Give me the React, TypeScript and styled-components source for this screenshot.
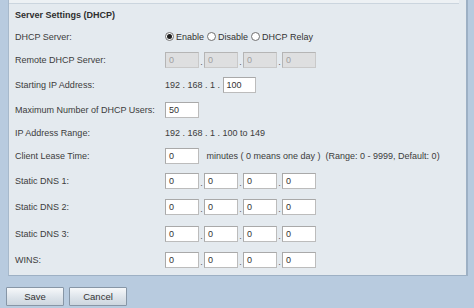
import React from "react";
import styled, { createGlobalStyle } from "styled-components";

const Global = createGlobalStyle`
  html, body { margin: 0; padding: 0; }
  body {
    background: #b8cbdf;
    font-family: "Liberation Sans", Arial, sans-serif;
    overflow: hidden;
  }
`;

const Page = styled.div`
  width: 474px;
  height: 308px;
  display: flex;
  flex-direction: column;
  background: #b8cbdf;
`;

const Panel = styled.div`
  margin: 0 6px 0 8px;
  height: 276px;
  box-sizing: border-box;
  background: #e4eaef;
  border-left: 1px solid #a7b9cb;
  border-right: 2px solid #9db0c4;
  border-bottom: 1px solid #9db0c4;
  display: flex;
  flex-direction: column;
`;

const TopStrip = styled.div`
  height: 3px;
  margin-right: 7px;
  background: #edf1f4;
  border-bottom: 1px solid #cbd5de;
`;

const Form = styled.div`
  display: flex;
  flex-direction: column;
  padding-left: 6px;
`;

const Row = styled.div<{ $h: number }>`
  height: ${(p) => p.$h}px;
  display: flex;
  align-items: center;
  font-size: 9px;
  color: #3c3c3c;
`;

const Heading = styled.div`
  font-weight: bold;
  font-size: 9px;
  color: #2e2e2e;
`;

const Label = styled.div`
  width: 150px;
  flex: none;
`;

const Value = styled.div`
  display: flex;
  align-items: center;
  white-space: pre;
`;

const Field = styled.div<{ $disabled?: boolean; $w?: number }>`
  width: ${(p) => p.$w ?? 34}px;
  height: 16px;
  box-sizing: border-box;
  border: 1px solid ${(p) => (p.$disabled ? "#c9c9c9" : "#bcbcbc")};
  border-top-color: ${(p) => (p.$disabled ? "#b5b5b5" : "#a9a9a9")};
  border-left-color: ${(p) => (p.$disabled ? "#b5b5b5" : "#a9a9a9")};
  background: ${(p) => (p.$disabled ? "#dedfe0" : "#ffffff")};
  color: ${(p) => (p.$disabled ? "#a0a0a0" : "#333")};
  font-size: 9px;
  line-height: 14px;
  padding-left: 3px;
  flex: none;
`;

const Dot = styled.span`
  width: 5px;
  text-align: center;
  font-size: 9px;
  color: #555;
  align-self: flex-end;
  line-height: 12px;
`;

const RadioItem = styled.label`
  display: flex;
  align-items: center;
  gap: 2px;
  margin-right: 3px;
  font-size: 9px;
  color: #333;
`;

const RadioCircle = styled.span<{ $on?: boolean }>`
  width: 9px;
  height: 9px;
  box-sizing: border-box;
  border-radius: 50%;
  border: 1px solid #707070;
  background: #fff;
  display: flex;
  align-items: center;
  justify-content: center;
  &::after {
    content: "";
    width: 5px;
    height: 5px;
    border-radius: 50%;
    background: ${(p) => (p.$on ? "#1e1e1e" : "transparent")};
  }
`;

const ButtonBar = styled.div`
  display: flex;
  gap: 5px;
  padding: 11px 0 0 6px;
`;

const Button = styled.button`
  width: 58px;
  height: 19px;
  box-sizing: border-box;
  border: 1px solid #8796a6;
  border-radius: 1px;
  background: linear-gradient(#f6f8fa, #dbe2e9 60%, #cdd6df);
  font-family: "Liberation Sans", Arial, sans-serif;
  font-size: 9.5px;
  color: #333;
  padding: 0;
`;

const IpFields = ({ values, disabled }: { values: string[]; disabled?: boolean }) => (
  <Value>
    {values.map((v, i) => (
      <React.Fragment key={i}>
        {i > 0 && <Dot>.</Dot>}
        <Field $disabled={disabled}>{v}</Field>
      </React.Fragment>
    ))}
  </Value>
);

const zeros = ["0", "0", "0", "0"];

export default function App() {
  return (
    <Page>
      <Global />
      <Panel>
        <TopStrip />
        <Form>
          <Row $h={22}>
            <Heading>Server Settings (DHCP)</Heading>
          </Row>
          <Row $h={21}>
            <Label>DHCP Server:</Label>
            <Value>
              <RadioItem>
                <RadioCircle $on />
                Enable
              </RadioItem>
              <RadioItem>
                <RadioCircle />
                Disable
              </RadioItem>
              <RadioItem>
                <RadioCircle />
                DHCP Relay
              </RadioItem>
            </Value>
          </Row>
          <Row $h={25}>
            <Label>Remote DHCP Server:</Label>
            <IpFields values={zeros} disabled />
          </Row>
          <Row $h={26}>
            <Label>Starting IP Address:</Label>
            <Value>
              {"192 . 168 . 1 . "}
              <Field $w={33}>100</Field>
            </Value>
          </Row>
          <Row $h={24}>
            <Label>Maximum Number of DHCP Users:</Label>
            <Value>
              <Field>50</Field>
            </Value>
          </Row>
          <Row $h={22}>
            <Label>IP Address Range:</Label>
            <Value>192 . 168 . 1 . 100 to 149</Value>
          </Row>
          <Row $h={24}>
            <Label>Client Lease Time:</Label>
            <Value>
              <Field>0</Field>
              {"   minutes ( 0 means one day )  (Range: 0 - 9999, Default: 0)"}
            </Value>
          </Row>
          <Row $h={26}>
            <Label>Static DNS 1:</Label>
            <IpFields values={zeros} />
          </Row>
          <Row $h={26}>
            <Label>Static DNS 2:</Label>
            <IpFields values={zeros} />
          </Row>
          <Row $h={27}>
            <Label>Static DNS 3:</Label>
            <IpFields values={zeros} />
          </Row>
          <Row $h={26}>
            <Label>WINS:</Label>
            <IpFields values={zeros} />
          </Row>
        </Form>
      </Panel>
      <ButtonBar>
        <Button>Save</Button>
        <Button>Cancel</Button>
      </ButtonBar>
    </Page>
  );
}
